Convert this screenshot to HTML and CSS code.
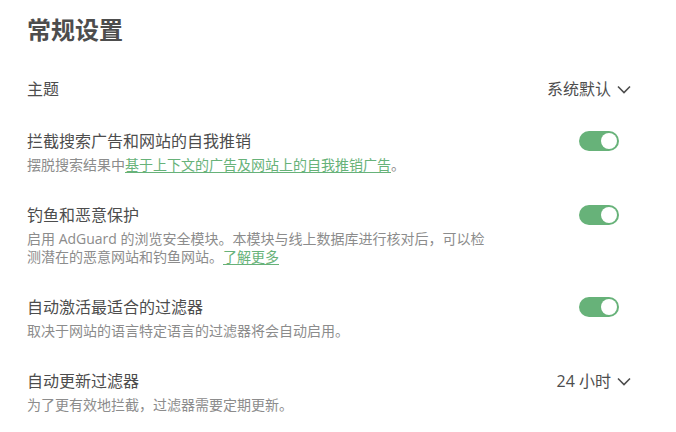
FILE: index.html
```html
<!doctype html>
<html lang="zh-CN">
<head>
  <meta charset="utf-8">
  <title>常规设置</title>
  <link rel="stylesheet" href="styles.css">
</head>
<body>

	<div class="page">
		<h1 class="page-title">常规设置</h1>

		<div class="settings">
			<div class="setting">
				<div class="setting-text">
					<div class="setting-name">主题</div>
				</div>
				<div class="select">
					<span>系统默认</span>
					<svg class="chevron" width="14" height="14" viewBox="0 0 14 14"><path d="M1 4.5l6 6 6-6" fill="none" stroke="#4d4d4d" stroke-width="1.6"/></svg>
				</div>
			</div>

			<div class="setting">
				<div class="setting-text">
					<div class="setting-name">拦截搜索广告和网站的自我推销</div>
					<div class="setting-desc">摆脱搜索结果中<a href="#">基于上下文的广告及网站上的自我推销广告</a>。</div>
				</div>
				<div class="toggle on"><span class="knob"></span></div>
			</div>

			<div class="setting">
				<div class="setting-text">
					<div class="setting-name">钓鱼和恶意保护</div>
					<div class="setting-desc">启用 AdGuard 的浏览安全模块。本模块与线上数据库进行核对后，可以检测潜在的恶意网站和钓鱼网站。<a href="#">了解更多</a></div>
				</div>
				<div class="toggle on"><span class="knob"></span></div>
			</div>

			<div class="setting">
				<div class="setting-text">
					<div class="setting-name">自动激活最适合的过滤器</div>
					<div class="setting-desc">取决于网站的语言特定语言的过滤器将会自动启用。</div>
				</div>
				<div class="toggle on"><span class="knob"></span></div>
			</div>

			<div class="setting">
				<div class="setting-text">
					<div class="setting-name">自动更新过滤器</div>
					<div class="setting-desc">为了更有效地拦截，过滤器需要定期更新。</div>
				</div>
				<div class="select">
					<span>24 小时</span>
					<svg class="chevron" width="14" height="14" viewBox="0 0 14 14"><path d="M1 4.5l6 6 6-6" fill="none" stroke="#4d4d4d" stroke-width="1.6"/></svg>
				</div>
			</div>
		</div>
	</div>

</body>
</html>
```

FILE: styles.css
```css
body {
	margin			: 0;
	background		: #fff;
	font-family		: "Open Sans", "Noto Sans CJK SC", sans-serif;
	color			: #4d4d4d;
}

.page {
	padding			: 15px 45px 0 27px;
}

.page-title {
	margin			: 0 0 33px;
	font-size		: 24px;
	line-height		: 30px;
	font-weight		: 700;
	color			: #4d4d4d;
}

.settings {
	display			: flex;
	flex-direction	: column;
	gap				: 30px;
}

.setting {
	display			: flex;
	justify-content	: space-between;
	align-items		: flex-start;
}

.setting-text {
	max-width		: 462px;
}

.setting-name {
	font-size		: 16px;
	line-height		: 22px;
	color			: #4d4d4d;
}

.setting-desc {
	margin-top		: 4px;
	font-size		: 14px;
	line-height		: 18px;
	color			: #8c8c8c;
}

.setting-desc a {
	color			: #67b279;
	text-decoration	: underline;
	text-underline-offset : 2px;
}

.select {
	display			: flex;
	align-items		: center;
	gap				: 6px;
	font-size		: 16px;
	line-height		: 22px;
	color			: #4d4d4d;
}

.chevron {
	display			: block;
}

.toggle {
	position		: relative;
	width			: 40px;
	height			: 20px;
	margin			: 1px 12px 0 0;
	border-radius	: 10px;
	background		: #ccc;
}

.toggle.on {
	background		: #67b279;
}

.knob {
	position		: absolute;
	top				: 2px;
	left			: 2px;
	width			: 16px;
	height			: 16px;
	border-radius	: 50%;
	background		: #fff;
}

.toggle.on .knob {
	left			: 22px;
}
```
